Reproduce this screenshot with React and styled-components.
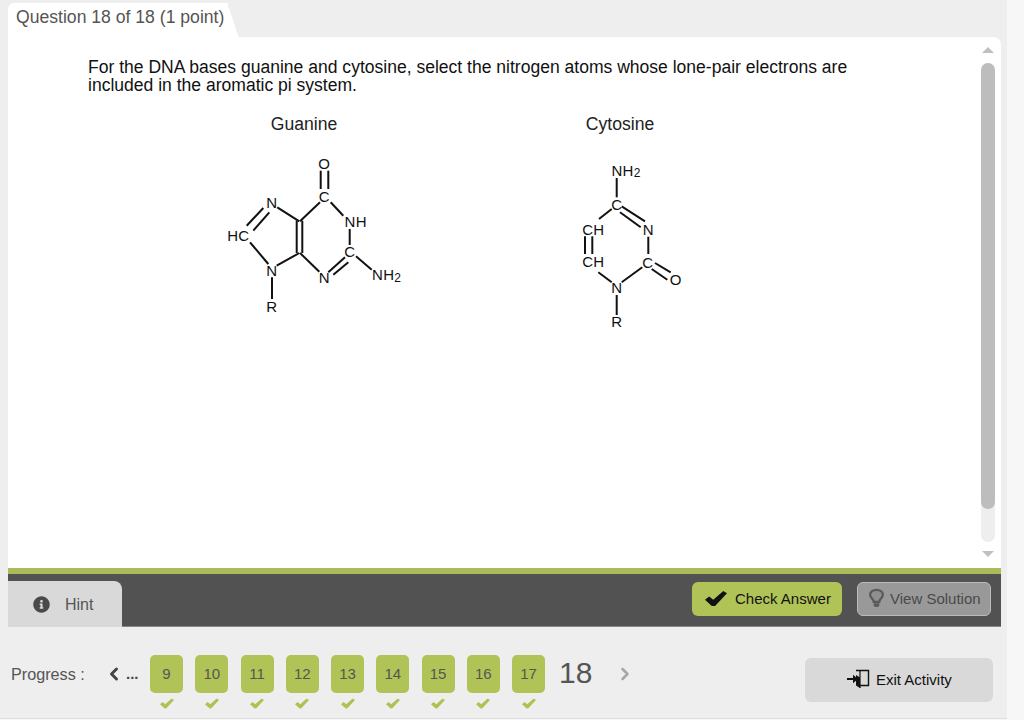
import styled, { createGlobalStyle } from 'styled-components'
import { FaInfoCircle } from 'react-icons/fa'
import { ChevronLeft, ChevronRight } from 'lucide-react'

const GlobalStyle = createGlobalStyle`
  html, body {
    margin: 0;
    padding: 0;
    height: 100%;
    overflow: hidden;
    background: #f7f7f7;
  }
  * { box-sizing: border-box; }
`

const done = [9, 10, 11, 12, 13, 14, 15, 16, 17]

function Bonds({ lines }) {
  return lines.map((l, i) => (
    <line key={i} x1={l[0]} y1={l[1]} x2={l[2]} y2={l[3]} stroke="#111" strokeWidth="2" />
  ))
}

function Atom({ x, y, children }) {
  return (
    <AtomLabel x={x} y={y} textAnchor="middle" dominantBaseline="central">
      {children}
    </AtomLabel>
  )
}

function Guanine() {
  return (
    <svg width="190" height="170" viewBox="220 150 190 170">
      <Bonds
        lines={[
          [320.7, 171.7, 320.7, 190],
          [328.3, 171.7, 328.3, 190],
          [330.7, 203.3, 343.3, 216.7],
          [349.7, 230, 349.7, 246],
          [356, 257.3, 371.7, 270.7],
          [345, 258.3, 328.3, 273.3],
          [348.3, 263.3, 333.3, 275.7],
          [319.3, 272.7, 300, 254],
          [296.7, 221.7, 296.7, 254],
          [302.3, 221.7, 302.3, 254],
          [300, 222.3, 320, 203.3],
          [277.3, 208.3, 299.3, 222.3],
          [263.3, 209, 246.7, 226.7],
          [269.3, 213.3, 253.3, 231.7],
          [250, 243.3, 268.3, 265],
          [276.7, 266.7, 299.3, 254],
          [272, 278.3, 272, 300],
        ]}
      />
      <Atom x={324.3} y={164}>O</Atom>
      <Atom x={324.3} y={197}>C</Atom>
      <Atom x={355.7} y={222}>NH</Atom>
      <Atom x={349.7} y={252}>C</Atom>
      <Atom x={386.7} y={275.5}>
        NH<Subscript dy="3">2</Subscript>
      </Atom>
      <Atom x={324.3} y={278}>N</Atom>
      <Atom x={271.7} y={203.5}>N</Atom>
      <Atom x={238.3} y={236}>HC</Atom>
      <Atom x={271.7} y={271}>N</Atom>
      <Atom x={271.7} y={307.5}>R</Atom>
    </svg>
  )
}

function Cytosine() {
  return (
    <svg width="120" height="185" viewBox="570 150 120 185">
      <Bonds
        lines={[
          [616.7, 179, 616.7, 198.3],
          [611.7, 210, 599, 220],
          [621.7, 207.3, 645, 222.3],
          [620, 213.3, 640.7, 228.3],
          [648.3, 237.7, 648.3, 255],
          [655, 264, 670.7, 273.3],
          [651.7, 270, 667.3, 280.7],
          [642.3, 268.3, 621.7, 283.3],
          [611.7, 283.3, 598.3, 273.3],
          [585, 237.3, 585, 255],
          [592.3, 237.3, 592.3, 255],
          [616.7, 296, 616.7, 316],
        ]}
      />
      <Atom x={626} y={171}>
        NH<Subscript dy="3">2</Subscript>
      </Atom>
      <Atom x={616.7} y={205}>C</Atom>
      <Atom x={648.3} y={230}>N</Atom>
      <Atom x={647.7} y={263}>C</Atom>
      <Atom x={675.7} y={280}>O</Atom>
      <Atom x={616.7} y={288.5}>N</Atom>
      <Atom x={593.3} y={230}>CH</Atom>
      <Atom x={593.3} y={262.5}>CH</Atom>
      <Atom x={616.7} y={322.5}>R</Atom>
    </svg>
  )
}

function CheckMark({ width, color }) {
  return (
    <svg width={width} viewBox="0 0 24 18" fill={color}>
      <path d="M0 10.5 L4.5 7 L9 10.5 L20 1 L24 3.5 L10.5 18 L8 18 Z" />
    </svg>
  )
}

function BulbIcon() {
  return (
    <svg width="15" height="20" viewBox="0 0 16 20">
      <path
        d="M5 14c0-3-3.800-4-3.800-7.600C1.200 3.300 4.200 1.200 8 1.200s6.800 2.100 6.800 5.200c0 3.600-3.800 4.600-3.800 7.600z"
        fill="#8f8f8f"
        stroke="#5a5a5a"
        strokeWidth="2.400"
      />
      <path d="M5 15.500h6V18l-1.500 1.500h-3L5 18z" fill="#5a5a5a" />
    </svg>
  )
}

function ExitIcon() {
  return (
    <svg width="23" height="20" viewBox="0 0 23 20">
      <path d="M0 9h6V5.800l5 4.200-5 4.200V11H0z" fill="#111" />
      <path d="M9 1.500h12.500v15H13" fill="none" stroke="#111" strokeWidth="1.400" />
      <path d="M9 1v5l4 2.500V19l-4-2.500v-3" fill="#111" />
      <path d="M12 1.500l1 .5v17" fill="none" stroke="#111" strokeWidth="1.200" />
    </svg>
  )
}

export default function App() {
  return (
    <Page>
      <GlobalStyle />
      <Frame>
        <TabRow>
          <QuestionTab>Question 18 of 18 (1 point)</QuestionTab>
        </TabRow>

        <Panel>
          <Content>
            <Prompt>
              For the DNA bases guanine and cytosine, select the nitrogen atoms whose lone-pair
              electrons are included in the aromatic pi system.
            </Prompt>
            <Molecules>
              <Molecule $width={190}>
                <MoleculeName $shift={22}>Guanine</MoleculeName>
                <Guanine />
              </Molecule>
              <Molecule $width={120}>
                <MoleculeName $shift={20}>Cytosine</MoleculeName>
                <Cytosine />
              </Molecule>
            </Molecules>
          </Content>
          <Scrollbar>
            <ArrowUp />
            <Track>
              <Thumb />
            </Track>
            <ArrowDown />
          </Scrollbar>
        </Panel>

        <ActionBar>
          <HintTab>
            <FaInfoCircle size={17} color="#4a4a4a" />
            Hint
          </HintTab>
          <Actions>
            <CheckButton>
              <CheckMark width={22} color="#111" />
              Check Answer
            </CheckButton>
            <SolutionButton>
              <BulbIcon />
              View Solution
            </SolutionButton>
          </Actions>
        </ActionBar>

        <Footer>
          <ProgressLabel>Progress :</ProgressLabel>
          <PrevArrow>
            <ChevronLeft size={20} strokeWidth={3.600} />
          </PrevArrow>
          <Dots>...</Dots>
          <Steps>
            {done.map((n) => (
              <Step key={n}>
                <StepTile>{n}</StepTile>
                <CheckMark width={14} color="#aec254" />
              </Step>
            ))}
          </Steps>
          <CurrentStep>18</CurrentStep>
          <NextArrow>
            <ChevronRight size={20} strokeWidth={3} />
          </NextArrow>
          <ExitButton>
            <ExitIcon />
            Exit Activity
          </ExitButton>
        </Footer>
      </Frame>
    </Page>
  )
}

const Page = styled.div`
  width: 1024px;
  height: 720px;
  background: #f7f7f7;
  font-family: 'Liberation Sans', Arial, sans-serif;
`

const Frame = styled.div`
  width: 1007px;
  height: 719px;
  background: #eeeeee;
  border-bottom: 1px solid #dddddd;
  padding: 3px 6px 0 8px;
  display: flex;
  flex-direction: column;
`

const TabRow = styled.div`
  height: 34px;
  display: flex;
`

const QuestionTab = styled.div`
  position: relative;
  isolation: isolate;
  width: 220px;
  padding: 4px 0 0 8px;
  background: #ffffff;
  border-radius: 6px 0 0 0;
  color: #555555;
  font-size: 17.600px;
  white-space: nowrap;

  &::after {
    content: '';
    position: absolute;
    z-index: -1;
    top: 0;
    bottom: 0;
    right: -5px;
    width: 14px;
    background: #ffffff;
    border-radius: 0 6px 0 0;
    transform: skewX(18deg);
  }
`

const Panel = styled.div`
  height: 531px;
  background: #ffffff;
  border-radius: 0 8px 0 0;
  display: flex;
`

const Content = styled.div`
  flex: 1;
  padding: 21px 0 0 80px;
`

const Prompt = styled.p`
  margin: 0;
  width: 780px;
  color: #111111;
  font-size: 17.540px;
  line-height: 18px;
`

const Molecules = styled.div`
  display: flex;
  margin-top: 20px;
  padding-left: 132px;
  gap: 160px;
`

const Molecule = styled.div`
  width: ${({ $width }) => $width}px;
  display: flex;
  flex-direction: column;
  align-items: center;
`

const MoleculeName = styled.div`
  height: 35px;
  margin-right: ${({ $shift }) => $shift}px;
  color: #222222;
  font-size: 17.600px;
  line-height: 20px;
  white-space: nowrap;
`

const AtomLabel = styled.text`
  fill: #111111;
  font-family: 'Liberation Sans', Arial, sans-serif;
  font-size: 15px;
  letter-spacing: 0.3px;
`

const Subscript = styled.tspan`
  font-size: 12px;
`

const Scrollbar = styled.div`
  width: 20px;
  margin-right: 3px;
  padding-top: 10px;
  display: flex;
  flex-direction: column;
  align-items: center;
`

const ArrowUp = styled.div`
  width: 0;
  height: 0;
  border-left: 6px solid transparent;
  border-right: 6px solid transparent;
  border-bottom: 6px solid #c0c0c0;
`

const ArrowDown = styled.div`
  width: 0;
  height: 0;
  margin-top: 9px;
  border-left: 6px solid transparent;
  border-right: 6px solid transparent;
  border-top: 6px solid #c0c0c0;
`

const Track = styled.div`
  width: 14px;
  height: 479px;
  margin-top: 10px;
  background: #eeeeee;
  border-radius: 7px;
`

const Thumb = styled.div`
  height: 446px;
  background: #bdbdbd;
  border-radius: 7px;
`

const ActionBar = styled.div`
  height: 59px;
  background: #525252;
  border-top: 6px solid #aabb5a;
  box-shadow: inset 0 -1px 0 #888888;
  display: flex;
  align-items: flex-end;
  justify-content: space-between;
`

const HintTab = styled.div`
  width: 114px;
  height: 46px;
  background: #d9d9d9;
  border-radius: 0 8px 0 0;
  padding: 1px 0 0 25px;
  display: flex;
  align-items: center;
  gap: 15px;
  color: #555555;
  font-size: 16px;
`

const Actions = styled.div`
  align-self: flex-start;
  margin-top: 8px;
  margin-right: 10px;
  display: flex;
  gap: 15px;
`

const ActionButton = styled.div`
  height: 34px;
  border-radius: 6px;
  padding-bottom: 2px;
  display: flex;
  align-items: center;
  font-size: 15px;
`

const CheckButton = styled(ActionButton)`
  width: 150px;
  padding-left: 13px;
  gap: 8px;
  background: #b0c357;
  color: #111111;
`

const SolutionButton = styled(ActionButton)`
  width: 134px;
  padding-left: 11px;
  gap: 6px;
  background: #999999;
  border: 1px solid #bbbbbb;
  color: #4a4a4a;
`

const Footer = styled.div`
  flex: 1;
  position: relative;
  display: flex;
  align-items: flex-start;
  margin-left: -8px;
  padding: 28px 0 0 11px;
`

const ProgressLabel = styled.div`
  width: 94px;
  color: #555555;
  font-size: 16.200px;
  line-height: 38px;
`

const PrevArrow = styled.div`
  width: 21px;
  height: 38px;
  margin-left: -1px;
  margin-right: 1px;
  display: flex;
  align-items: center;
  color: #444444;
`

const Dots = styled.div`
  width: 24px;
  color: #444444;
  font-size: 15px;
  font-weight: 700;
  line-height: 38px;
`

const Steps = styled.div`
  display: flex;
  gap: 12.250px;
`

const Step = styled.div`
  width: 33px;
  display: flex;
  flex-direction: column;
  align-items: center;
  gap: 5px;
`

const StepTile = styled.div`
  width: 33px;
  height: 38px;
  padding-bottom: 1px;
  background: #b0c357;
  border-radius: 5px;
  display: flex;
  align-items: center;
  justify-content: center;
  color: #555555;
  font-size: 15px;
`

const CurrentStep = styled.div`
  width: 70px;
  padding-left: 14px;
  color: #555555;
  font-size: 30px;
  line-height: 36px;
`

const NextArrow = styled.div`
  height: 38px;
  display: flex;
  align-items: center;
  color: #a6a6a6;
`

const ExitButton = styled.div`
  position: absolute;
  left: 805px;
  top: 31px;
  width: 188px;
  height: 44px;
  padding: 0 0 2px 42px;
  background: #d9d9d9;
  border-radius: 6px;
  display: flex;
  align-items: center;
  gap: 6px;
  color: #111111;
  font-size: 15px;
`
